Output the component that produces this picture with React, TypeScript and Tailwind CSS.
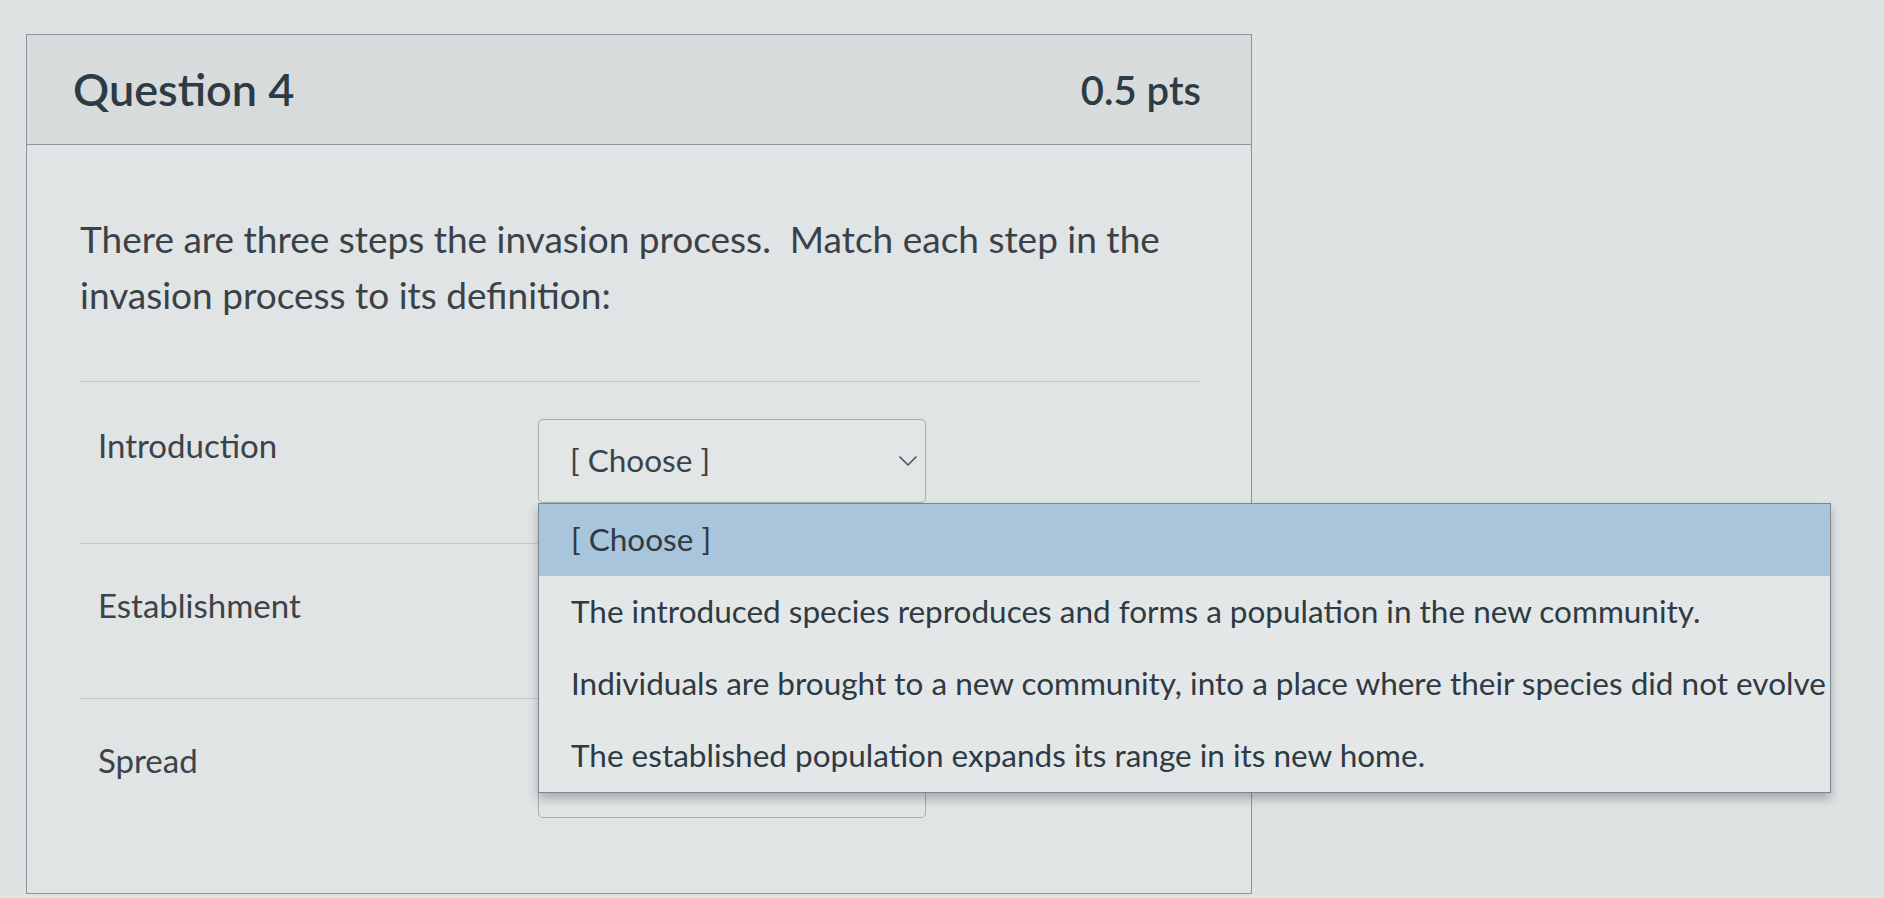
const rows = [
  { label: 'Introduction', open: true },
  { label: 'Establishment', open: false },
  { label: 'Spread', open: false },
];

const options = [
  '[ Choose ]',
  'The introduced species reproduces and forms a population in the new community.',
  'Individuals are brought to a new community, into a place where their species did not evolve',
  'The established population expands its range in its new home.',
];

function Chevron() {
  return (
    <svg width="20" height="12" viewBox="0 0 20 12" fill="none" className="text-[#4a5157]">
      <polyline points="2,2 10,10 18,2" stroke="currentColor" strokeWidth="1.6" strokeLinecap="round" strokeLinejoin="round" />
    </svg>
  );
}

function Dropdown() {
  return (
    <div className="absolute left-0 top-full z-10 w-[1293px] overflow-hidden border border-[#7f868a] bg-[#e3e7e8] shadow-[0_6px_10px_rgba(0,0,0,0.25)]">
      {options.map((opt, i) => (
        <div
          key={opt}
          className={`flex h-[72px] items-center whitespace-nowrap pl-[32px] text-[31.5px] text-[#2f3a42] ${
            i === 0 ? 'bg-[#a8c5dc]' : ''
          }`}
        >
          {opt}
        </div>
      ))}
    </div>
  );
}

function MatchRow({ label, open, last }: { label: string; open: boolean; last: boolean }) {
  return (
    <div className={`flex ${open ? 'pt-[37px] pb-[40px]' : 'py-[35px]'} ${last ? '' : 'border-b border-[#c3c8ca]'}`}>
      <div className="w-[458px] pl-[18px] pt-[6px] text-[33px] leading-[40px] text-[#3b434a]">{label}</div>
      <div className="relative">
        <div className="flex h-[84px] w-[388px] items-center justify-between rounded-[5px] border border-[#a9aeb1] bg-[#e2e6e7] pl-[31px] pr-[7px] text-[31.5px] text-[#3b434a]">
          <span>[ Choose ]</span>
          <Chevron />
        </div>
        {open && <Dropdown />}
      </div>
    </div>
  );
}

export default function App() {
  return (
    <div
      className="min-h-[898px] overflow-hidden bg-[#dee3e4] pl-[26px] pt-[34px]"
      style={{ fontFamily: 'Lato, "Liberation Sans", sans-serif' }}
    >
      <div className="h-[860px] w-[1226px] border border-[#8e9497] bg-[#e0e4e5]">
        {/* Header */}
        <div className="flex h-[110px] items-center justify-between border-b border-[#8e9497] bg-[#d7dbdc] pl-[46px] pr-[50px] text-[#2d3b45]">
          <h2 className="text-[45px] font-semibold">Question 4</h2>
          <div className="text-[40px] font-semibold">0.5 pts</div>
        </div>

        {/* Body */}
        <div className="pl-[53px] pr-[50px] pt-[66px]">
          <p className="w-[1130px] text-[37px] leading-[56px] text-[#3a4249]">
            There are three steps the invasion process.&nbsp; Match each step in the invasion process to its
            definition:
          </p>
          <div className="mt-[58px] border-t border-[#c3c8ca]" />
          <div>
            {rows.map((r, i) => (
              <MatchRow key={r.label} label={r.label} open={r.open} last={i === rows.length - 1} />
            ))}
          </div>
        </div>
      </div>
    </div>
  );
}
